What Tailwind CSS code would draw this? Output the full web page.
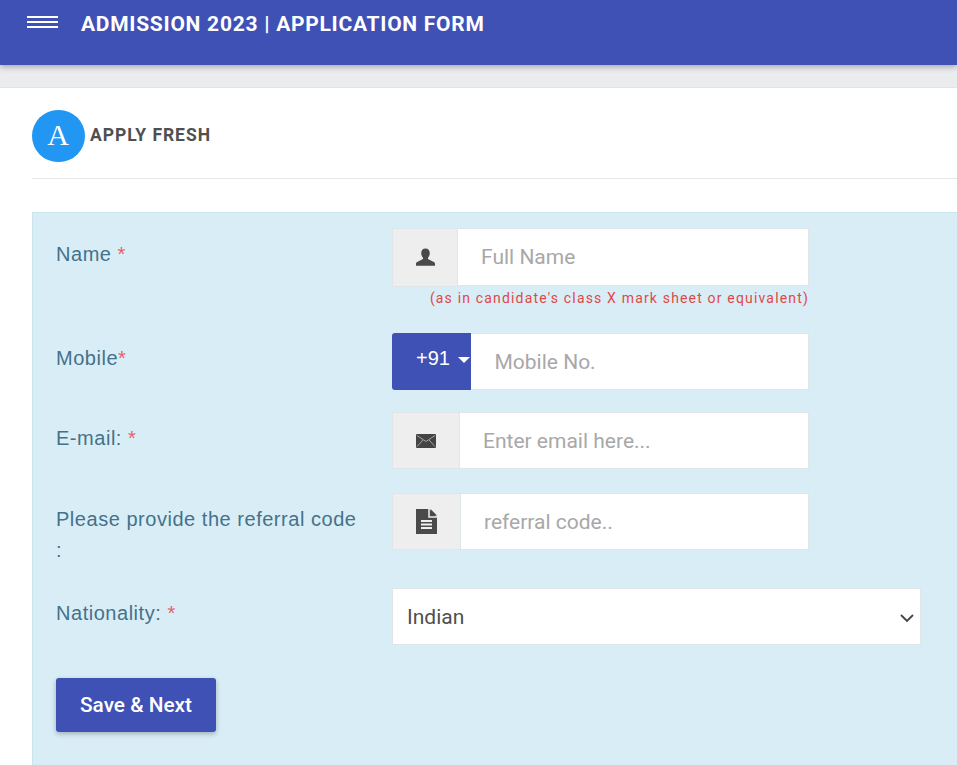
<!DOCTYPE html>
<html lang="en">
<head>
    <meta charset="UTF-8">
    <meta name="viewport" content="width=device-width, initial-scale=1.0">
    <title>Application Form</title>
    <script src="https://cdn.jsdelivr.net/npm/@tailwindcss/browser@4"></script>
</head>
<body class="bg-white font-['Roboto',sans-serif] h-[765px] overflow-hidden">

    <!-- Top bar -->
    <header class="h-[65px] bg-[#3f51b5] flex items-start shadow-[0_2px_6px_rgba(0,0,0,0.3)] relative">
        <div class="ml-[27px] mt-[16px] w-[31px] flex flex-col gap-[3px]">
            <span class="block h-[2px] bg-white"></span>
            <span class="block h-[2px] bg-white"></span>
            <span class="block h-[2px] bg-white"></span>
        </div>
        <h1 class="ml-[23px] mt-[10px] text-[21px] leading-[28px] font-bold text-white tracking-[0.73px]">ADMISSION 2023 | APPLICATION FORM</h1>
    </header>
    <div class="h-[23px] bg-[#ebeced] border-b border-[#e2e4e6]"></div>

    <!-- Section heading -->
    <div class="ml-[32px] h-[91px] border-b border-[#e4e6e8] flex items-start pt-[22px]">
        <div class="w-[53px] h-[52px] pb-[3px] pr-[1px] rounded-full bg-[#2196f3] text-white flex items-center justify-center font-['Liberation_Serif',serif] text-[30px] leading-none">A</div>
        <span class="ml-[5px] mt-[15px] text-[17.5px] leading-[20px] font-bold text-[#4f4f4f] tracking-[0.95px]">APPLY FRESH</span>
    </div>

    <!-- Form panel -->
    <form class="ml-[32px] mt-[33px] w-[925px] h-[553px] bg-[#d9edf7] border border-r-0 border-b-0 border-[#c9e6ee] pl-[23px] pt-[15px] text-[#44728a] text-[20px] tracking-[0.53px] font-['Liberation_Sans',sans-serif]">

        <div class="grid grid-cols-[336px_417px]">
            <label class="pt-[12px] leading-[28px]">Name <span class="text-[#e4606a]">*</span></label>
            <div>
                <div class="flex h-[59px] font-['Roboto',sans-serif]">
                    <div class="w-[66px] bg-[#eeeeee] border border-[#dfe6e9] flex items-center justify-center">
                        <svg class="w-[19px] h-[19px]" viewBox="0 0 16 16" fill="#4a4a4a"><path d="M8 0.5c-2.3 0-3.6 1.7-3.6 3.9 0 1.5.6 2.9 1.5 3.7v1.2L1 11.8c-.6.3-1 .8-1 1.5V15h16v-1.7c0-.7-.4-1.2-1-1.5l-4.9-2.5V8.100c.9-.8 1.500-2.200 1.500-3.700C11.600 2.200 10.300.5 8 .5z"/></svg>
                    </div>
                    <div class="w-[351px] h-[58px] bg-white border border-[#dfe6e9] border-l-0 pl-[23px] pt-[2px] flex items-center text-[21px] text-[#a8a8a8] tracking-normal">Full Name</div>
                </div>
                <p class="mt-[1px] text-right text-[14px] leading-[20px] text-[#e04848] tracking-[1.17px] font-['Roboto',sans-serif]">(as in candidate's class X mark sheet or equivalent)</p>
            </div>
        </div>

        <div class="grid grid-cols-[336px_417px] mt-[25px]">
            <label class="pt-[11px] leading-[28px]">Mobile<span class="text-[#e4606a]">*</span></label>
            <div class="flex h-[57px] font-['Roboto',sans-serif]">
                <div class="w-[79px] bg-[#3f51b5] rounded-l-[3px] text-white flex items-start pl-[24px] pt-[11px] text-[20px] leading-[28px] tracking-normal font-['Liberation_Sans',sans-serif]">
                    +91
                    <span class="ml-[8px] mt-[13px] w-0 h-0 border-x-[6px] border-x-transparent border-t-[6px] border-t-white"></span>
                </div>
                <div class="w-[338px] bg-white border border-[#dfe6e9] border-l-0 pl-[23.5px] pt-[2px] flex items-center text-[21px] text-[#a8a8a8] tracking-normal">Mobile No.</div>
            </div>
        </div>

        <div class="grid grid-cols-[336px_417px] mt-[22px]">
            <label class="pt-[12px] leading-[28px]">E-mail: <span class="text-[#e4606a]">*</span></label>
            <div class="flex h-[57px] font-['Roboto',sans-serif]">
                <div class="w-[68px] bg-[#eeeeee] border border-[#dfe6e9] pr-[1px] flex items-center justify-center">
                    <svg class="w-[20px] h-[14px]" viewBox="0 0 20 14"><rect width="20" height="14" rx="1" fill="#444444"/><path d="M1 1.500l9 6 9-6M1 12.500l6-6.500M19 12.500l-6-6.500" fill="none" stroke="#cccccc" stroke-width="0.700"/></svg>
                </div>
                <div class="w-[349px] bg-white border border-[#dfe6e9] border-l-0 pl-[23px] pt-[2px] flex items-center text-[21px] text-[#a8a8a8] tracking-normal">Enter email here...</div>
            </div>
        </div>

        <div class="grid grid-cols-[336px_417px] mt-[24px] h-[57px]">
            <label class="pt-[11px] leading-[31px] w-[306px]">Please provide the referral code :</label>
            <div class="flex h-[57px] font-['Roboto',sans-serif]">
                <div class="w-[69px] bg-[#eeeeee] border border-[#dfe6e9] pr-[1px] flex items-center justify-center">
                    <svg class="w-[21px] h-[25px]" viewBox="0 0 21 25"><path d="M0 0h13l8 8v17H0z" fill="#4a4a4a"/><path d="M14.500 0l6.500 6.500h-6.500z" fill="#4a4a4a"/><path d="M13 0v8h8" fill="none" stroke="#eeeeee" stroke-width="1.500"/><path d="M5 12h11M5 15.500h11M5 19h11" stroke="#eeeeee" stroke-width="1.800"/></svg>
                </div>
                <div class="w-[348px] bg-white border border-[#dfe6e9] border-l-0 pl-[23px] pt-[2px] flex items-center text-[21px] text-[#a8a8a8] tracking-normal">referral code..</div>
            </div>
        </div>

        <div class="grid grid-cols-[336px_529px] mt-[38px]">
            <label class="pt-[11px] leading-[28px]">Nationality: <span class="text-[#e4606a]">*</span></label>
            <div class="h-[57px] bg-white border border-[#dfe6e9] pl-[14px] pr-[5px] pt-[2px] flex items-center justify-between font-['Roboto',sans-serif] text-[21px] text-[#4f4f4f] tracking-normal">
                Indian
                <svg class="w-[16px] h-[16px]" viewBox="0 0 16 16" fill="none" stroke="#444444" stroke-width="1.800"><path d="M2 5l6 6 6-6"/></svg>
            </div>
        </div>

        <button type="button" class="mt-[33px] w-[160px] h-[54px] pt-[2px] bg-[#3f51b5] rounded-[3px] text-white text-[20.8px] tracking-normal font-medium font-['Roboto',sans-serif] shadow-[0_2px_5px_rgba(0,0,0,0.26)]">Save &amp; Next</button>
    </form>

</body>
</html>
